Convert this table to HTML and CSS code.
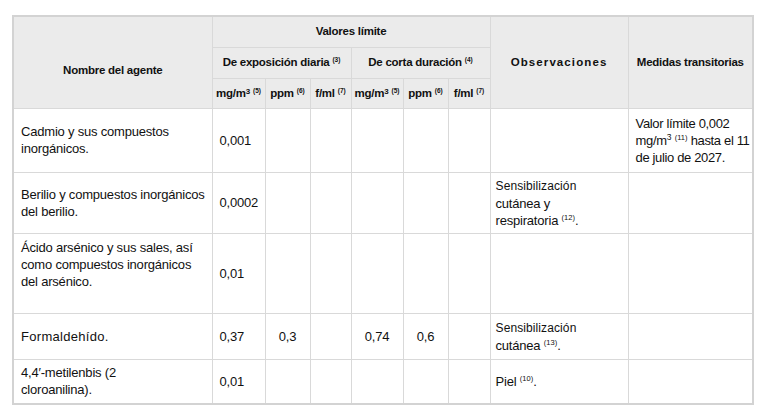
FILE: index.html
```html
<!DOCTYPE html>
<html lang="es">
<head>
<meta charset="utf-8">
<title>Valores límite</title>
<link rel="stylesheet" href="styles.css">
</head>
<body>
<table class="limits">
  <colgroup>
    <col class="c-name"><col class="c-mg"><col class="c-ppm"><col class="c-fml">
    <col class="c-mg2"><col class="c-ppm2"><col class="c-fml2">
    <col class="c-obs"><col class="c-med">
  </colgroup>
  <thead>
    <tr class="h1">
      <th rowspan="3" class="th-name">Nombre del agente</th>
      <th colspan="6">Valores límite</th>
      <th rowspan="3" class="th-obs">Observaciones</th>
      <th rowspan="3">Medidas transitorias</th>
    </tr>
    <tr class="h2">
      <th colspan="3">De exposición diaria <sup>(3)</sup></th>
      <th colspan="3">De corta duración <sup>(4)</sup></th>
    </tr>
    <tr class="h3">
      <th>mg/m<sup class="p">3</sup> <sup>(5)</sup></th>
      <th>ppm <sup>(6)</sup></th>
      <th>f/ml <sup>(7)</sup></th>
      <th>mg/m<sup class="p">3</sup> <sup>(5)</sup></th>
      <th>ppm <sup>(6)</sup></th>
      <th>f/ml <sup>(7)</sup></th>
    </tr>
  </thead>
  <tbody>
    <tr class="r1">
      <td class="name">Cadmio y sus compuestos<br>inorgánicos.</td>
      <td>0,001</td><td></td><td></td><td></td><td></td><td></td><td></td>
      <td class="med">Valor límite 0,002<br>mg/m<sup class="p">3</sup> <sup>(11)</sup> hasta el 11<br>de julio de 2027.</td>
    </tr>
    <tr class="r2">
      <td class="name">Berilio y compuestos inorgánicos<br>del berilio.</td>
      <td>0,0002</td><td></td><td></td><td></td><td></td><td></td>
      <td class="obs"><span class="sp">Sensibilización</span><br>cutánea y<br>respiratoria <sup>(12)</sup>.</td>
      <td></td>
    </tr>
    <tr class="r3">
      <td class="name extra">Ácido arsénico y sus sales, así<br>como compuestos inorgánicos<br>del arsénico.</td>
      <td>0,01</td><td></td><td></td><td></td><td></td><td></td><td></td><td></td>
    </tr>
    <tr class="r4">
      <td class="name form">Formaldehído.</td>
      <td>0,37</td><td class="ctr">0,3</td><td></td><td class="ctr">0,74</td><td class="ctr">0,6</td><td></td>
      <td class="obs"><span class="sp">Sensibilización</span><br>cutánea <sup>(13)</sup>.</td>
      <td></td>
    </tr>
    <tr class="r5">
      <td class="name">4,4′-metilenbis (2<br>cloroanilina).</td>
      <td>0,01</td><td></td><td></td><td></td><td></td><td></td>
      <td class="obs">Piel <sup>(10)</sup>.</td>
      <td></td>
    </tr>
  </tbody>
</table>
</body>
</html>
```

FILE: styles.css
```css
html, body {
  margin: 0;
  padding: 0;
  background: #ffffff;
}

body {
  font-family: "Liberation Sans", Arial, sans-serif;
  color: #111111;
}

.limits {
  margin: 15px 0 0 12px;
  width: 740px;
  table-layout: fixed;
  border-collapse: collapse;
  border: 2px solid #d3d3d3;
}

.c-name { width: 199px; }
.c-mg { width: 53px; }
.c-ppm { width: 45px; }
.c-fml { width: 41px; }
.c-mg2 { width: 52px; }
.c-ppm2 { width: 45px; }
.c-fml2 { width: 42px; }
.c-obs { width: 138px; }
.c-med { width: 125px; }

.limits th,
.limits td {
  border: 1px solid #d9d9d9;
  padding: 0;
}

.limits th {
  background: #ebebeb;
  font-weight: bold;
  font-size: 11.5px;
  letter-spacing: -0.25px;
  line-height: 15px;
  text-align: center;
  vertical-align: middle;
  white-space: nowrap;
  color: #111111;
}

.limits th sup {
  font-size: 6.5px;
  letter-spacing: 0;
  vertical-align: 4px;
  line-height: 0;
}

.limits th sup.p {
  font-size: 8px;
  vertical-align: 3px;
}

.limits .th-name {
  padding-top: 16px;
}

.limits .th-obs {
  letter-spacing: 1.1px;
}

.h1 { height: 31px; }
.h2 { height: 31px; }
.h3 { height: 30px; }

.limits td {
  font-size: 13px;
  letter-spacing: -0.2px;
  line-height: 17px;
  vertical-align: middle;
  padding: 0 4px 0 7px;
  white-space: nowrap;
}

.limits td sup {
  font-size: 7.5px;
  letter-spacing: 0;
  line-height: 0;
  vertical-align: 5px;
}

.limits td sup.p {
  font-size: 8.5px;
  vertical-align: 5px;
}

.limits td.med {
  letter-spacing: -0.35px;
}

.limits td.obs {
  padding-left: 5px;
}

.limits td.ctr {
  text-align: center;
  padding: 0;
}

.limits td.extra {
  padding-bottom: 17px;
}

.limits td.form {
  letter-spacing: 0.3px;
}

.sp {
  font-size: 12px;
  letter-spacing: 0.1px;
}

.r1 { height: 64px; }
.r2 { height: 61px; }
.r3 { height: 80px; }
.r4 { height: 46px; }
.r5 { height: 45px; }
```
